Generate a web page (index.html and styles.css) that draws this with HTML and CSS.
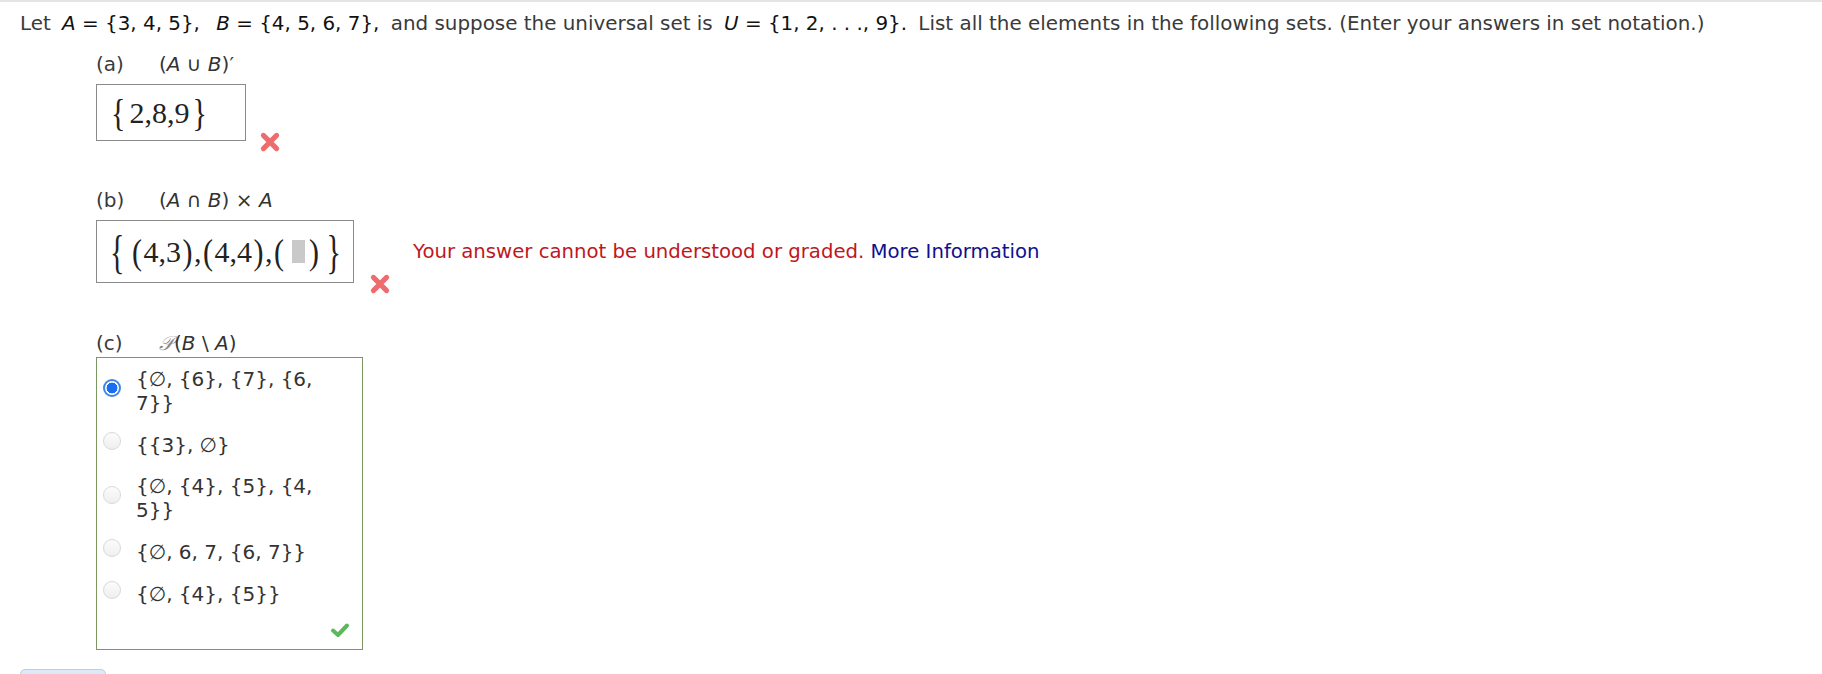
FILE: index.html
```html
<!DOCTYPE html>
<html>
<head>
<meta charset="utf-8">
<link rel="stylesheet" href="styles.css">
</head>
<body>
<div class="page">
  <p class="question">Let <span class="m"><i>A</i> = {3, 4, 5},</span> <span class="m"><i>B</i> = {4, 5, 6, 7},</span> and suppose the universal set is <span class="m"><i>U</i> = {1, 2, . . ., 9}.</span> List all the elements in the following sets. (Enter your answers in set notation.)</p>

  <section class="part part-a">
    <div class="label"><span class="letter">(a)</span><span class="expr">(<i>A</i> ∪ <i>B</i>)′</span></div>
    <div class="answer-row">
      <div class="mathbox box-a"><span class="brace mid">{</span><span class="num">2,8,9</span><span class="brace mid">}</span></div>
      <svg class="icon-x" viewBox="0 0 20 20"><path d="M4 4 L16 16 M16 4 L4 16"/></svg>
    </div>
  </section>

  <section class="part part-b">
    <div class="label"><span class="letter">(b)</span><span class="expr">(<i>A</i> ∩ <i>B</i>) × <i>A</i></span></div>
    <div class="answer-row">
      <div class="mathbox box-b"><span class="brace big">{</span><span class="paren">(</span><span class="num">4,3</span><span class="paren">)</span><span class="num">,</span><span class="paren">(</span><span class="num">4,4</span><span class="paren">)</span><span class="num">,</span><span class="paren">(</span><span class="cursor"></span><span class="paren">)</span><span class="brace big">}</span></div>
      <svg class="icon-x" viewBox="0 0 20 20"><path d="M4 4 L16 16 M16 4 L4 16"/></svg>
      <p class="error">Your answer cannot be understood or graded. <span class="link">More Information</span></p>
    </div>
  </section>

  <section class="part part-c">
    <div class="label"><span class="letter">(c)</span><span class="expr"><span class="script">𝒫</span>(<i>B</i> \ <i>A</i>)</span></div>
    <div class="choices">
      <div class="option">
        <span class="radio checked"></span>
        <span class="opt-text">{∅, {6}, {7}, {6, 7}}</span>
      </div>
      <div class="option">
        <span class="radio"></span>
        <span class="opt-text">{{3}, ∅}</span>
      </div>
      <div class="option">
        <span class="radio"></span>
        <span class="opt-text">{∅, {4}, {5}, {4, 5}}</span>
      </div>
      <div class="option">
        <span class="radio"></span>
        <span class="opt-text">{∅, 6, 7, {6, 7}}</span>
      </div>
      <div class="option">
        <span class="radio"></span>
        <span class="opt-text">{∅, {4}, {5}}</span>
      </div>
      <div class="check-row">
        <svg class="icon-check" viewBox="0 0 20 16"><path d="M3 8.5 L8 13 L17 3.5"/></svg>
      </div>
    </div>
  </section>

  <div class="submit-btn"></div>
</div>
</body>
</html>
```

FILE: styles.css
```css
html, body {
  margin: 0;
  padding: 0;
  background: #fff;
}

.page {
  border-top: 2px solid #e4e4e4;
  padding: 10px 20px 0;
  font-family: "DejaVu Sans", Verdana, sans-serif;
  font-size: 20px;
  color: #3a3a3a;
}

.question {
  margin: 0;
  line-height: 24px;
  white-space: nowrap;
  font-size: 19.9px;
}

.m {
  color: #111;
  margin: 0 5px;
}

i {
  font-style: italic;
}

.part {
  margin-left: 76px;
}

.part-a { margin-top: 16px; }
.part-b { margin-top: 47px; }
.part-c { margin-top: 48px; }

.label {
  display: flex;
  line-height: 24px;
  height: 24px;
}

.letter {
  width: 63px;
}

.expr {
  color: #333;
}

.script {
  font-family: "DejaVu Serif", "Liberation Serif", serif;
  font-style: italic;
  color: #888;
  margin-right: 1px;
}

.answer-row {
  display: flex;
  align-items: flex-end;
  margin-top: 8px;
}

.mathbox {
  box-sizing: border-box;
  border: 1px solid #8a8a8a;
  display: flex;
  align-items: center;
  font-family: "Liberation Serif", "Times New Roman", serif;
  font-size: 30px;
  color: #222;
}

.box-a {
  width: 150px;
  height: 57px;
  padding-left: 14px;
}

.box-b {
  width: 258px;
  height: 63px;
  padding-left: 13px;
}

.brace {
  display: inline-block;
  line-height: 1;
}

.brace.mid {
  transform: scale(1.0, 1.25);
  margin: 0 4px 0 0;
}

.box-a .brace.mid + .num { margin-right: 3px; }

.brace.big {
  transform: scale(1.0, 1.55);
  margin: 0 6px 0 0;
}

.brace.big:last-child {
  margin: 0 0 0 6px;
}

.paren {
  display: inline-block;
  transform: scaleY(1.2);
  margin: 0 1.5px;
}

.cursor {
  display: inline-block;
  width: 13px;
  height: 23px;
  background: #c9c9c9;
  margin: 0 2px 0 7px;
}

.icon-x {
  width: 22px;
  height: 22px;
  margin-left: 13px;
  margin-bottom: -12px;
  flex: none;
}

.icon-x path {
  fill: none;
  stroke: #ec5b5e;
  stroke-width: 4.6;
  stroke-linecap: round;
  opacity: 0.9;
}

.part-b .icon-x {
  margin-left: 15px;
}

.error {
  align-self: center;
  margin: 0 0 0 22px;
  color: #c0171d;
  line-height: 24px;
  white-space: nowrap;
  font-size: 19.7px;
}

.link {
  color: #10108f;
}

.choices {
  box-sizing: border-box;
  width: 267px;
  height: 293px;
  margin-top: 2px;
  border: 1px solid #7d9763;
  padding: 9px 12px 0 6px;
  display: flex;
  flex-direction: column;
  gap: 17px;
  color: #333;
}

.option {
  display: flex;
  align-items: center;
  line-height: 24px;
}

.radio {
  flex: none;
  box-sizing: border-box;
  width: 18px;
  height: 18px;
  border-radius: 50%;
  border: 1px solid #d9d9d9;
  background: linear-gradient(#fcfcfc, #efefef);
  margin-bottom: 7px;
  margin-right: 15px;
}

.radio.checked {
  border: 2px solid #3a86ea;
  background: radial-gradient(circle, #1a6ff0 0 5.2px, #fff 5.7px);
}

.opt-text {
  width: 195px;
}

.check-row {
  display: flex;
  justify-content: flex-end;
  margin-top: -1px;
}

.icon-check {
  width: 20px;
  height: 16px;
}

.icon-check path {
  fill: none;
  stroke: #5cb85c;
  stroke-width: 4;
  stroke-linecap: round;
  stroke-linejoin: round;
}

.submit-btn {
  margin-top: 19px;
  width: 86px;
  height: 30px;
  box-sizing: border-box;
  border: 1px solid #b8d0ec;
  border-radius: 5px;
  background: #dce9f8;
}
```
